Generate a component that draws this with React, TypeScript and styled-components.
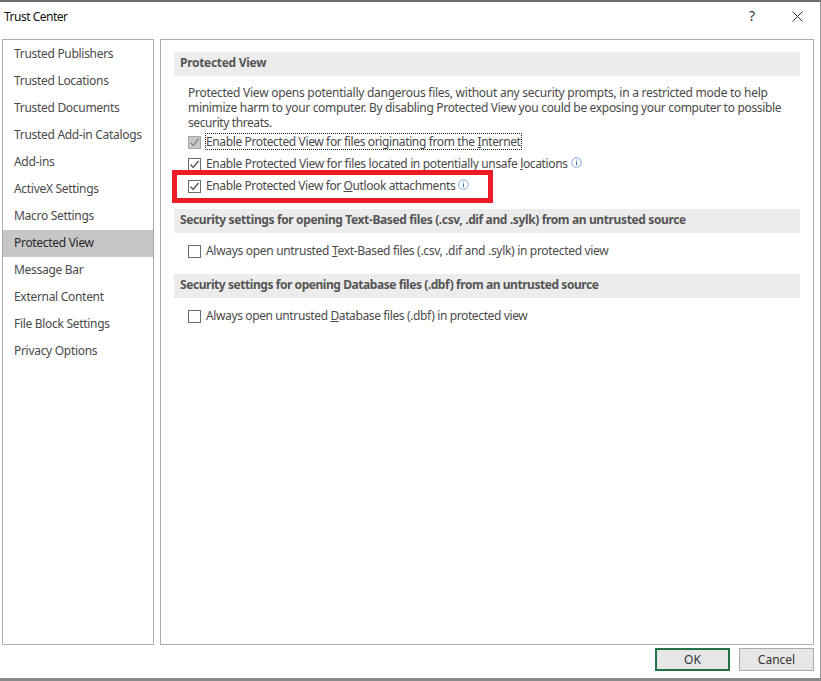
import React from "react";
import styled, { createGlobalStyle } from "styled-components";

const Global = createGlobalStyle`
  html, body { margin: 0; padding: 0; background: #fff; }
  body { font-family: "Noto Sans", "Open Sans", sans-serif; font-size: 12px; color: #444; }
`;

const Page = styled.div`
  position: relative;
  width: 821px;
  height: 681px;
  overflow: hidden;
`;

const Dialog = styled.div`
  width: 821px;
  height: 681px;
  box-sizing: border-box;
  background: #fff;
  border-top: 2px solid #6d6d6d;
  border-bottom: 3px solid #8a8a8a;
  border-right: 1px solid #9a9a9a;
  display: flex;
  flex-direction: column;
  overflow: hidden;
`;

const TitleBar = styled.div`
  height: 37px;
  flex: none;
  display: flex;
  align-items: center;
  padding: 0 17px 8px 4px;
  box-sizing: border-box;
`;

const Title = styled.div`
  flex: 1;
  font-size: 12px;
  color: #111;
  letter-spacing: -0.5px;
`;

const HelpButton = styled.div`
  width: 18px;
  margin: 0 31px 2px 0;
  text-align: center;
  font-size: 14px;
  color: #333;
`;

const Body = styled.div`
  height: 606px;
  flex: none;
  display: flex;
  gap: 6px;
  padding: 0 6px 0 2px;
`;

const Nav = styled.nav`
  width: 152px;
  flex: none;
  box-sizing: border-box;
  border: 1px solid #ababab;
  padding-top: 1px;
`;

const NavItem = styled.div<{ $active?: boolean }>`
  height: 27px;
  line-height: 26px;
  padding-left: 11px;
  font-size: 12px;
  letter-spacing: -0.3px;
  white-space: nowrap;
  color: ${(p) => (p.$active ? "#262626" : "#4a4a4a")};
  background: ${(p) => (p.$active ? "#c6c6c6" : "transparent")};
`;

const Content = styled.main`
  flex: 1;
  box-sizing: border-box;
  border: 1px solid #ababab;
  padding: 12px 13px 0 13px;
`;

const SectionHeader = styled.div<{ $top?: number; $tracking: number }>`
  height: 24px;
  margin-top: ${(p) => p.$top ?? 0}px;
  line-height: 22px;
  background: #ececec;
  padding-left: 6px;
  font-weight: 700;
  font-size: 12px;
  letter-spacing: ${(p) => p.$tracking}px;
  color: #555;
`;

const Description = styled.p`
  margin: 9px 0 0 14px;
  font-size: 12px;
  line-height: 15px;
  color: #4a4a4a;
`;

const DescriptionLine = styled.span<{ $tracking: number }>`
  display: block;
  white-space: nowrap;
  letter-spacing: ${(p) => p.$tracking}px;
`;

const OptionList = styled.div<{ $top: number }>`
  margin: ${(p) => p.$top}px 0 0 14px;
  display: flex;
  flex-direction: column;
`;

const Option = styled.label`
  height: 22px;
  display: flex;
  align-items: center;
  gap: 4px;
  font-size: 12px;
  color: #4a4a4a;
  white-space: nowrap;
`;

const Box = styled.span<{ $disabled?: boolean }>`
  width: 13px;
  height: 13px;
  flex: none;
  box-sizing: border-box;
  border: 1px solid ${(p) => (p.$disabled ? "#a8a8a8" : "#6a6a6a")};
  background: ${(p) => (p.$disabled ? "#c8c8c8" : "#fff")};
  display: flex;
  align-items: center;
  justify-content: center;
`;

const OptionText = styled.span<{ $focused?: boolean; $tracking: number }>`
  padding: 0 1px;
  margin-bottom: 2px;
  letter-spacing: ${(p) => p.$tracking}px;
  outline: ${(p) => (p.$focused ? "1px dotted #222" : "none")};
  outline-offset: -1px;
  line-height: 17px;
  u { text-underline-offset: 1px; }
`;

const InfoIcon = styled.svg`
  margin-left: -2px;
  margin-top: -3px;
  flex: none;
`;

const Highlight = styled.div`
  position: absolute;
  left: 172px;
  top: 170px;
  width: 321px;
  height: 33px;
  box-sizing: border-box;
  border: 5px solid #ed1c24;
  pointer-events: none;
`;

const Footer = styled.div`
  flex: 1;
  display: flex;
  justify-content: flex-end;
  align-items: flex-start;
  gap: 9px;
  padding: 3px 6px 0 0;
`;

const Button = styled.div<{ $primary?: boolean }>`
  width: 75px;
  height: 23px;
  box-sizing: border-box;
  border: ${(p) => (p.$primary ? "2px solid #217346" : "1px solid #ababab")};
  background: #e6e6e6;
  display: flex;
  align-items: center;
  justify-content: center;
  font-size: 12px;
  color: #333;
`;

const Check = ({ c = "#555" }: { c?: string }) => (
  <svg width="11" height="11" viewBox="0 0 11 11">
    <path d="M1.5 5.5 L4.2 8.5 L9.5 2" fill="none" stroke={c} strokeWidth="1.3" />
  </svg>
);

const Info = () => (
  <InfoIcon width="11" height="11" viewBox="0 0 11 11">
    <circle cx="5.5" cy="5.5" r="4.8" fill="none" stroke="#7ba7dc" strokeWidth="1" />
    <path d="M5.5 4.6V8.4M5.5 2.6V3.6" stroke="#3f78b8" strokeWidth="1" />
  </InfoIcon>
);

const navItems = [
  "Trusted Publishers",
  "Trusted Locations",
  "Trusted Documents",
  "Trusted Add-in Catalogs",
  "Add-ins",
  "ActiveX Settings",
  "Macro Settings",
  "Protected View",
  "Message Bar",
  "External Content",
  "File Block Settings",
  "Privacy Options",
];

export default function App() {
  return (
    <Page>
      <Global />
      <Dialog>
        <TitleBar>
          <Title>Trust Center</Title>
          <HelpButton>?</HelpButton>
          <svg width="11" height="11" viewBox="0 0 11 11">
            <path d="M0.5 0.5 L10.5 10.5 M10.5 0.5 L0.5 10.5" stroke="#333" strokeWidth="1" />
          </svg>
        </TitleBar>
        <Body>
          <Nav>
            {navItems.map((n) => (
              <NavItem key={n} $active={n === "Protected View"}>
                {n}
              </NavItem>
            ))}
          </Nav>
          <Content>
            <SectionHeader $tracking={-0.3}>Protected View</SectionHeader>
            <Description>
              <DescriptionLine $tracking={-0.26}>Protected View opens potentially dangerous files, without any security prompts, in a restricted mode to help</DescriptionLine>
              <DescriptionLine $tracking={-0.32}>minimize harm to your computer. By disabling Protected View you could be exposing your computer to possible</DescriptionLine>
              <DescriptionLine $tracking={-0.4}>security threats.</DescriptionLine>
            </Description>
            <OptionList $top={1}>
              <Option>
                <Box $disabled><Check c="#8a8a8a" /></Box>
                <OptionText $focused $tracking={-0.37}>Enable Protected View for files originating from the <u>I</u>nternet</OptionText>
              </Option>
              <Option>
                <Box><Check /></Box>
                <OptionText $tracking={-0.35}>Enable Protected View for files located in potentially unsafe <u>l</u>ocations</OptionText>
                <Info />
              </Option>
              <Option>
                <Box><Check /></Box>
                <OptionText $tracking={-0.39}>Enable Protected View for <u>O</u>utlook attachments</OptionText>
                <Info />
              </Option>
            </OptionList>
            <SectionHeader $top={12} $tracking={-0.37}>Security settings for opening Text-Based files (.csv, .dif and .sylk) from an untrusted source</SectionHeader>
            <OptionList $top={7}>
              <Option>
                <Box />
                <OptionText $tracking={-0.31}>Always open untrusted <u>T</u>ext-Based files (.csv, .dif and .sylk) in protected view</OptionText>
              </Option>
            </OptionList>
            <SectionHeader $top={12} $tracking={-0.44}>Security settings for opening Database files (.dbf) from an untrusted source</SectionHeader>
            <OptionList $top={7}>
              <Option>
                <Box />
                <OptionText $tracking={-0.38}>Always open untrusted <u>D</u>atabase files (.dbf) in protected view</OptionText>
              </Option>
            </OptionList>
          </Content>
        </Body>
        <Footer>
          <Button $primary>OK</Button>
          <Button>Cancel</Button>
        </Footer>
      </Dialog>
      <Highlight />
    </Page>
  );
}
